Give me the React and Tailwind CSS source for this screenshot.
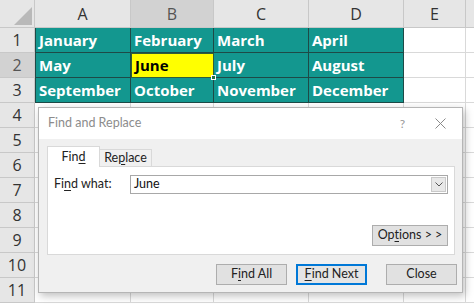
import React from "react";

const COLS = ["A", "B", "C", "D", "E"];
const WIDTHS = "35px 96px 83px 95px 95px 62px 1fr";
const MONTHS = [
  ["January", "February", "March", "April"],
  ["May", "June", "July", "August"],
  ["September", "October", "November", "December"],
];
const sheetFont = { fontFamily: '"Open Sans", "Noto Sans", sans-serif' };
const uiFont = { fontFamily: 'Lato, "Noto Sans", sans-serif' };

function Key({ children }) {
  return <span className="underline underline-offset-2">{children}</span>;
}

function Button({ children, primary, className = "" }) {
  return (
    <div
      className={`flex h-[21px] w-[71px] items-center justify-center text-[12.5px] text-[#222] ${
        primary ? "border-2 border-[#0078d7] bg-[#e5e5e5]" : "border border-[#adadad] bg-[#e1e1e1]"
      } ${className}`}
    >
      {children}
    </div>
  );
}

function Sheet() {
  const rows = [];
  for (let r = 1; r <= 11; r++) rows.push(r);
  return (
    <div className="grid" style={{ gridTemplateColumns: WIDTHS, ...sheetFont }}>
      {/* column headers */}
      <div className="relative h-[28px] border-r border-b border-[#c8c8c8] bg-[#e6e6e6]">
        <svg className="absolute right-[2px] bottom-[2px]" width="18" height="18" viewBox="0 0 18 18">
          <polygon points="18,0 18,18 0,18" fill="#b9b9b9" />
        </svg>
      </div>
      {COLS.map((c) => (
        <div
          key={c}
          className={`flex h-[28px] items-center justify-center border-r border-b border-[#c8c8c8] text-[16px] ${
            c === "B" ? "bg-[#d2d2d2] text-[#555]" : "bg-[#e6e6e6] text-[#333]"
          }`}
        >
          {c}
        </div>
      ))}
      <div className="h-[28px] border-b border-[#c8c8c8] bg-[#e6e6e6]" />

      {rows.map((r) => (
        <React.Fragment key={r}>
          <div
            className={`flex h-[25px] items-center justify-center border-r border-b border-[#c8c8c8] text-[16px] ${
              r === 2 ? "bg-[#d2d2d2] text-[#555]" : "bg-[#e6e6e6] text-[#333]"
            }`}
          >
            {r}
          </div>
          {COLS.map((c, ci) => {
            const month = r <= 3 && ci < 4 ? MONTHS[r - 1][ci] : null;
            if (month && r === 2 && ci === 1) {
              return (
                <div
                  key={c}
                  className="relative flex h-[25px] items-center border border-[#2f5e3a] bg-[#ffff00] pl-[3px] text-[15px] font-bold text-black"
                >
                  {month}
                  <div className="absolute -right-[3px] -bottom-[3px] h-[5px] w-[5px] border border-white bg-[#217346]" />
                </div>
              );
            }
            if (month) {
              return (
                <div
                  key={c}
                  className={`flex h-[25px] items-center border-r border-b border-[#1e4a47] bg-[#13978f] pl-[3px] text-[15px] font-bold text-white ${
                    ci === 0 ? "border-l" : ""
                  }`}
                >
                  {month}
                </div>
              );
            }
            return <div key={c} className="h-[25px] border-r border-b border-[#d9d9d9] bg-white" />;
          })}
          <div className="h-[25px] border-b border-[#d9d9d9] bg-white" />
        </React.Fragment>
      ))}
    </div>
  );
}

function Dialog() {
  return (
    <div
      className="absolute left-[38px] top-[107px] flex h-[186px] w-[425px] flex-col border border-[#b5b5b5] bg-[#f0f0f0] shadow-[2px_3px_8px_rgba(0,0,0,0.25)]"
      style={uiFont}
    >
      <div className="flex h-[31px] items-center bg-white">
        <span className="pl-[9px] text-[12.5px] text-[#8c8c8c]">Find and Replace</span>
        <span className="ml-auto mr-[30px] text-[12px] text-[#999]">?</span>
        <svg className="mr-[16px]" width="11" height="11" viewBox="0 0 11 11">
          <path d="M0.5 0.5 L10.5 10.5 M10.5 0.5 L0.5 10.5" stroke="#8a8a8a" strokeWidth="1" />
        </svg>
      </div>

      <div className="flex pl-[8px] pt-[7px]">
        <div className="relative z-10 -mb-px flex h-[21px] w-[53px] items-center justify-center border border-b-0 border-[#d9d9d9] bg-white text-[12.5px] text-[#222]">
          Fin<Key>d</Key>
        </div>
        <div className="mt-[3px] flex h-[17px] w-[52px] items-center justify-center border border-l-0 border-b-0 border-[#d9d9d9] bg-[#f0f0f0] text-[12.5px] text-[#222]">
          Re<Key>p</Key>lace
        </div>
      </div>

      <div className="mx-[8px] flex h-[89px] w-[408px] flex-col border border-[#d9d9d9] bg-white">
        <div className="mt-[8px] flex items-center">
          <span className="w-[82px] pl-[6px] text-[12.5px] text-[#222]">
            Fi<Key>n</Key>d what:
          </span>
          <div className="flex h-[19px] w-[318px] items-center border border-[#a8a8a8] bg-white">
            <span className="pl-[3px] text-[12.5px] text-[#111]">June</span>
            <div className="ml-auto mr-px flex h-[15px] w-[15px] items-center justify-center border border-[#c9c9c9] bg-[#e8e8e8]">
              <svg width="8" height="5" viewBox="0 0 8 5">
                <path d="M0.5 0.5 L4 4 L7.5 0.5" stroke="#555" fill="none" strokeWidth="1" />
              </svg>
            </div>
          </div>
        </div>
        <div className="mt-auto mb-[8px] ml-[324px]">
          <Button className="w-[76px]">
            Op<Key>t</Key>ions &gt; &gt;
          </Button>
        </div>
      </div>

      <div className="mt-[9px] flex pl-[177px]">
        <Button>
          F<Key>i</Key>nd All
        </Button>
        <Button primary className="ml-[9px]">
          <Key>F</Key>ind Next
        </Button>
        <Button className="ml-[19px]">Close</Button>
      </div>
    </div>
  );
}

export default function App() {
  return (
    <div className="relative h-[304px] w-[474px] overflow-hidden bg-white">
      <Sheet />
      <Dialog />
    </div>
  );
}
